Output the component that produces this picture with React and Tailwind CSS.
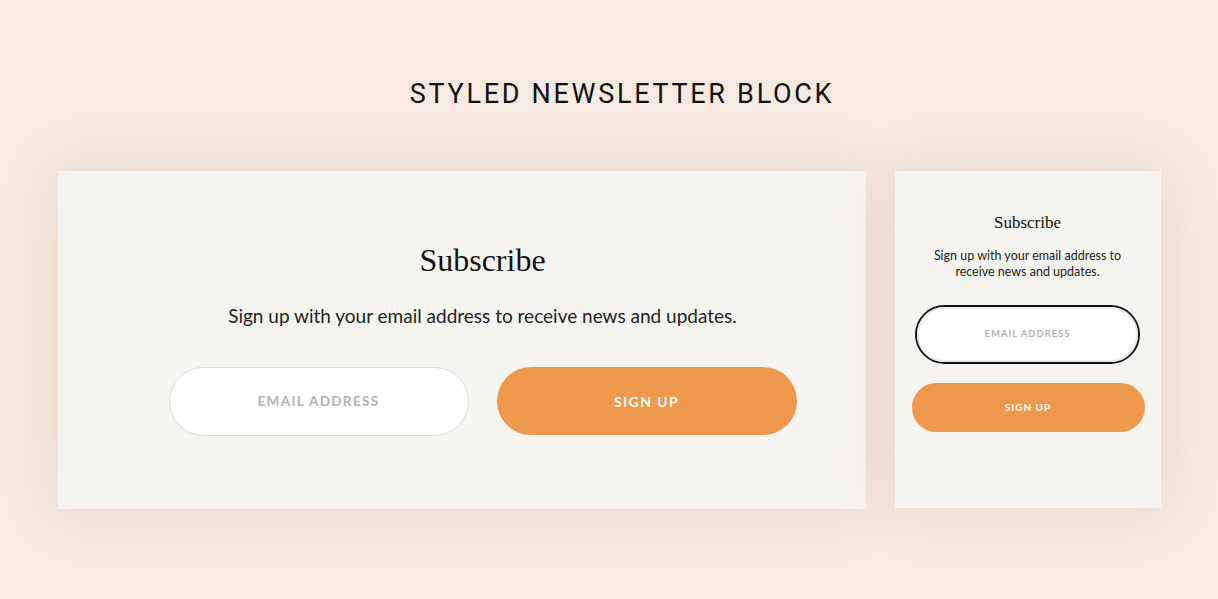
export default function App() {
  return (
    <div className="min-h-[599px] w-full bg-[#f6e9df] pt-[81px] font-['Lato',sans-serif]">
      <h1 className="pl-[26px] text-center font-['Roboto',sans-serif] text-[27px] font-normal leading-none tracking-[0.1em] text-[#111]">
        STYLED NEWSLETTER BLOCK
      </h1>

      <div className="mx-auto mt-[63px] flex w-[1103px] items-start gap-[29px]">
        {/* wide version */}
        <div className="flex h-[338px] w-[808px] flex-col items-center bg-[#f7f5f1] pl-[111px] pr-[69px] pt-[73px] shadow-[0_0_60px_rgba(150,100,60,0.13)]">
          <h2 className="font-['Liberation_Serif',serif] text-[32px] leading-none text-[#111]">Subscribe</h2>
          <p className="mt-[30px] text-[19px] leading-[20px] text-[#222]">
            Sign up with your email address to receive news and updates.
          </p>
          <div className="mt-[41px] flex gap-[28px]">
            <div className="flex h-[69px] w-[300px] items-center justify-center rounded-full border border-[#dcdcdc] bg-white">
              <span className="text-[13.5px] font-bold tracking-[0.1em] text-[#b3b3b3]">EMAIL ADDRESS</span>
            </div>
            <button className="flex h-[68px] w-[300px] items-center justify-center rounded-full bg-[#ed984a]">
              <span className="text-[14px] font-bold tracking-[0.1em] text-white">SIGN UP</span>
            </button>
          </div>
        </div>

        {/* narrow version */}
        <div className="flex h-[337px] w-[266px] flex-col items-center bg-[#f7f5f1] px-[16px] pt-[43px] shadow-[0_0_60px_rgba(150,100,60,0.13)]">
          <h2 className="font-['Liberation_Serif',serif] text-[17px] leading-none text-[#111]">Subscribe</h2>
          <p className="mt-[17px] text-center text-[12.5px] leading-[16px] text-[#222]">
            Sign up with your email address to
            <br />
            receive news and updates.
          </p>
          <div className="mt-[25px] h-[59px] w-[225px] rounded-full border-2 border-[#111]">
            <div className="flex h-full w-full items-center justify-center rounded-full border-2 border-[#ebebeb] bg-white">
              <span className="text-[9.5px] font-bold tracking-[0.1em] text-[#b3b3b3]">EMAIL ADDRESS</span>
            </div>
          </div>
          <button className="ml-[1px] mt-[19px] flex h-[49px] w-[233px] items-center justify-center rounded-full bg-[#ed984a]">
            <span className="text-[10px] font-bold tracking-[0.1em] text-white">SIGN UP</span>
          </button>
        </div>
      </div>
    </div>
  );
}
